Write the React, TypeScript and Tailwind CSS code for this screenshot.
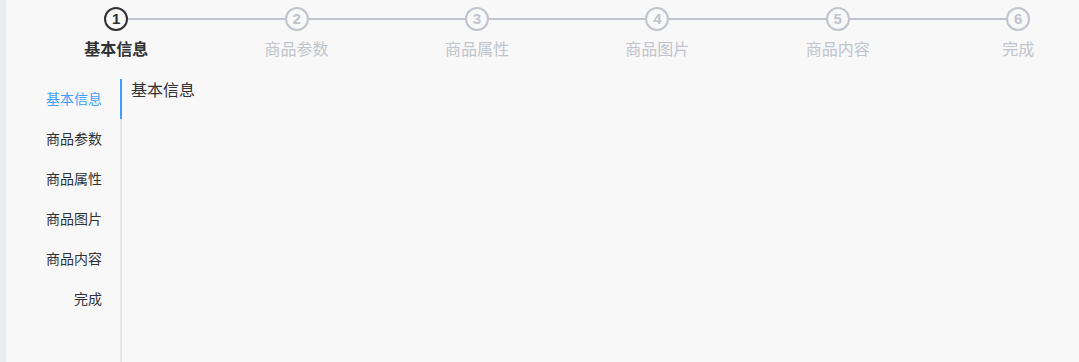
const steps = ["基本信息", "商品参数", "商品属性", "商品图片", "商品内容", "完成"];

export default function App() {
  const active = 0;

  return (
    <div
      className="flex h-[362px] w-[1079px] overflow-hidden bg-[#f8f8f8]"
      style={{ fontFamily: '"Liberation Sans", "Noto Sans CJK SC", sans-serif' }}
    >
      <div className="w-[6px] shrink-0 bg-[#e9edf2]"></div>

      <div className="flex min-w-0 flex-1 flex-col">
        {/* Steps */}
        <div className="ml-[20px] flex pt-[7px]">
          {steps.map((s, i) => {
            const done = i === active;
            return (
              <div key={s} className="relative flex w-[180.4px] shrink-0 flex-col items-center">
                {i < steps.length - 1 && (
                  <div className="absolute left-[calc(50%+12px)] top-[11px] h-[2px] w-[calc(100%-24px)] bg-[#c0c4cc]"></div>
                )}
                <div
                  className={`relative z-10 flex h-[24px] w-[24px] items-center justify-center rounded-full border-2 text-[15px] font-bold ${
                    done ? "border-[#303133] text-[#303133]" : "border-[#c0c4cc] text-[#c0c4cc]"
                  }`}
                >
                  {i + 1}
                </div>
                <div
                  className={`mt-[7px] text-[16px] leading-[24px] ${
                    done ? "font-bold text-[#303133]" : "text-[#c0c4cc]"
                  }`}
                >
                  {s}
                </div>
              </div>
            );
          })}
        </div>

        {/* Tabs */}
        <div className="mt-[17px] flex flex-1">
          <div className="relative w-[116px] shrink-0 border-r-2 border-[#e4e7ed]">
            {steps.map((s, i) => (
              <div
                key={s}
                className={`relative h-[40px] pr-[18px] text-right text-[14px] leading-[40px] ${
                  i === active ? "text-[#409eff]" : "text-[#303133]"
                }`}
              >
                {s}
                {i === active && (
                  <div className="absolute right-[-2px] top-0 h-[40px] w-[2px] bg-[#409eff]"></div>
                )}
              </div>
            ))}
          </div>
          <div className="pl-[9px] pt-[1px] text-[16px] leading-[22px] text-[#303133]">基本信息</div>
        </div>
      </div>
    </div>
  );
}
